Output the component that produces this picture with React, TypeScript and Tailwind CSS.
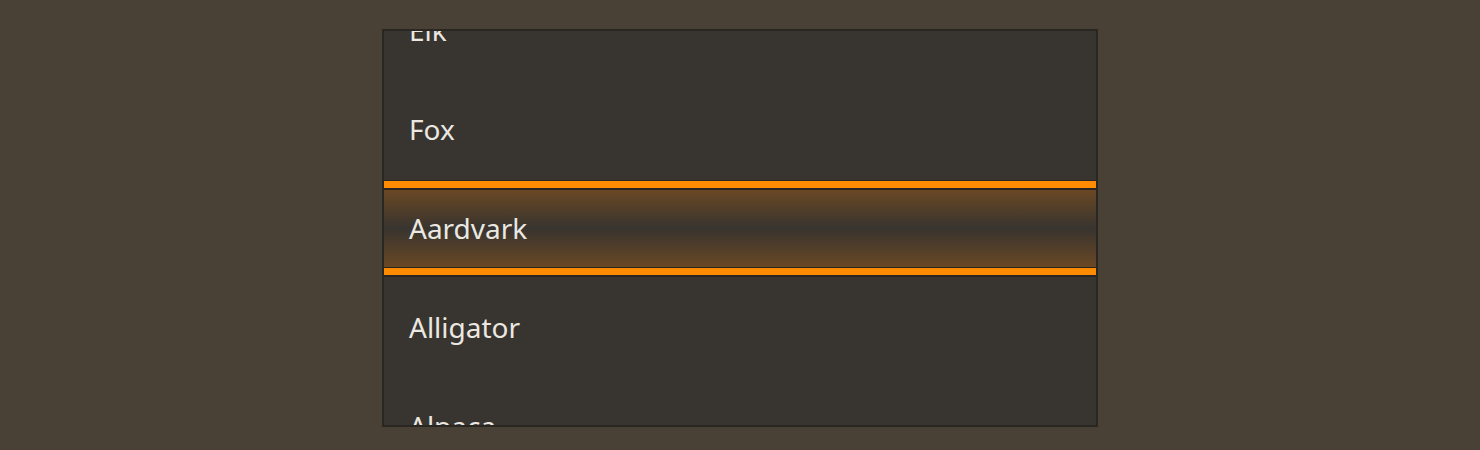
import React from "react";

const items = ["Elk", "Fox", "Aardvark", "Alligator", "Alpaca"];

export default function App() {
  return (
    <div className="w-[1480px] h-[450px] bg-[#4a4136] pt-[29px] pl-[382px]" style={{ fontFamily: '"Noto Sans", "Open Sans", sans-serif' }}>
      <div className="relative w-[716px] h-[398px] border-2 border-[#2a2621] bg-[#38342f] overflow-hidden">
        <div className="absolute left-0 right-0 top-[149px] h-[97px] flex flex-col pointer-events-none">
          <div className="h-[1px] bg-[#2a2520]" />
          <div className="h-[7px] bg-[#ff8c00]" />
          <div className="h-[2px] bg-[#2a2520]" />
          <div className="flex-1 bg-[linear-gradient(to_bottom,#6a4824_0%,#38342f_50%,#6a4824_100%)]" />
          <div className="h-[1px] bg-[#2a2520]" />
          <div className="h-[7px] bg-[#ff8c00]" />
          <div className="h-[2px] bg-[#2a2520]" />
        </div>
        <div className="relative flex flex-col mt-[-50.5px]">
          {items.map((it) => (
            <div key={it} className="h-[99px] shrink-0 flex items-center pl-[25px] text-[28px] text-[#ebe8e2] leading-none">
              {it}
            </div>
          ))}
        </div>
      </div>
    </div>
  );
}
